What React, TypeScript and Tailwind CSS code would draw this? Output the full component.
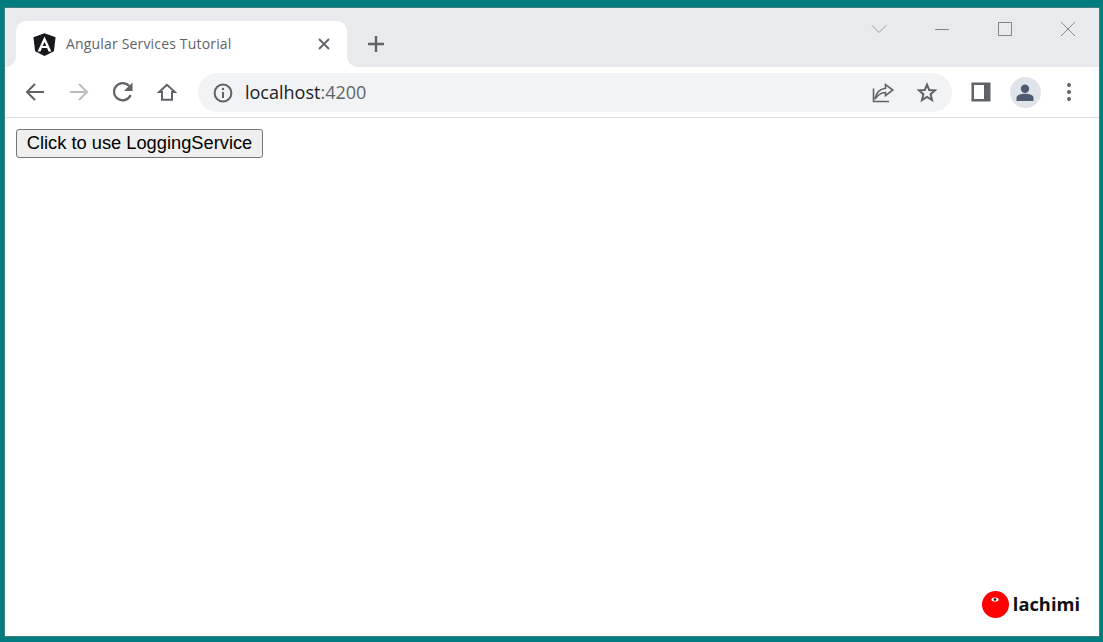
import React from "react";

const Ico = ({ children, size = 24, className = "" }: { children: React.ReactNode; size?: number; className?: string }) => (
  <svg width={size} height={size} viewBox={`0 0 ${size} ${size}`} fill="none" className={className}>
    {children}
  </svg>
);

function WindowControls() {
  return (
    <div className="ml-auto self-start flex">
      <div className="w-[63px] h-[42px] flex items-center justify-center">
        <Ico size={16}><path d="M1 4.5 L8 11.5 L15 4.5" stroke="#9a9ca0" strokeWidth="1" /></Ico>
      </div>
      <div className="w-[63px] h-[42px] flex items-center justify-center">
        <Ico size={16}><path d="M1 8.5 H15" stroke="#85878b" strokeWidth="1" /></Ico>
      </div>
      <div className="w-[63px] h-[42px] flex items-center justify-center">
        <Ico size={16}><rect x="1.5" y="1.5" width="13" height="13" stroke="#85878b" strokeWidth="1" /></Ico>
      </div>
      <div className="w-[63px] h-[42px] flex items-center justify-center">
        <Ico size={16}><path d="M1 1 L15 15 M15 1 L1 15" stroke="#85878b" strokeWidth="1" /></Ico>
      </div>
    </div>
  );
}

function Tab() {
  return (
    <div className="relative w-[331px] h-[46px] bg-white rounded-t-[10px] flex items-center pl-[17px] pr-[17px]">
      <div className="absolute left-[-11px] bottom-0 w-[11px] h-[11px] bg-white">
        <div className="w-full h-full bg-[#e8eaed] rounded-br-[11px]" />
      </div>
      <div className="absolute right-[-11px] bottom-0 w-[11px] h-[11px] bg-white">
        <div className="w-full h-full bg-[#e8eaed] rounded-bl-[11px]" />
      </div>
      <svg width="23" height="23" viewBox="0 0 23 23" className="shrink-0">
        <path d="M11.5 0.3 L22.6 4.2 L20.9 18.3 L11.5 23 L2.1 18.3 L0.4 4.2 Z" fill="#16181b" />
        <path d="M11.5 3.6 L4.6 18.6 H7.5 L8.9 15.1 H14.1 L15.5 18.6 H18.4 Z M11.5 8.9 L13.3 13 H9.7 Z" fill="#ffffff" fillRule="evenodd" />
      </svg>
      <span className="ml-[10px] text-[14px] tracking-[0.17px] leading-none text-[#5f6368] font-['Open_Sans',sans-serif]">Angular Services Tutorial</span>
      <svg width="12" height="12" viewBox="0 0 12 12" className="ml-auto">
        <path d="M1 1 L11 11 M11 1 L1 11" stroke="#5f6368" strokeWidth="1.8" />
      </svg>
    </div>
  );
}

function ToolbarButton({ children }: { children: React.ReactNode }) {
  return <div className="w-[44px] h-[39px] pb-[1px] flex items-center justify-center shrink-0">{children}</div>;
}

function Toolbar() {
  return (
    <div className="h-[51px] bg-white border-b border-[#dadce0] flex items-center pt-[1px] pl-[8px] shrink-0">
      <ToolbarButton>
        <Ico><path d="M21 12 H4.5 M12 4 L4 12 L12 20" stroke="#5f6368" strokeWidth="2" /></Ico>
      </ToolbarButton>
      <ToolbarButton>
        <Ico><path d="M3 12 H19.5 M12 4 L20 12 L12 20" stroke="#babcbe" strokeWidth="2" /></Ico>
      </ToolbarButton>
      <ToolbarButton>
        <Ico>
          <path d="M19.6 15 A8.6 8.6 0 1 1 18.1 6" stroke="#5f6368" strokeWidth="2.2" />
          <path d="M21.5 2.5 V11 H13 Z" fill="#5f6368" />
        </Ico>
      </ToolbarButton>
      <ToolbarButton>
        <Ico><path d="M12 4.8 L4.2 12 H7 V19.8 H17 V12 H19.8 Z" stroke="#5f6368" strokeWidth="2" strokeLinejoin="miter" /></Ico>
      </ToolbarButton>
      <div className="ml-[9px] w-[754px] h-[39px] rounded-full bg-[#f1f3f4] flex items-center pl-[14px] pr-[3px]">
        <Ico size={22}>
          <circle cx="11" cy="11" r="8.4" stroke="#5f6368" strokeWidth="2" />
          <path d="M11 10 V16" stroke="#5f6368" strokeWidth="2" />
          <circle cx="11" cy="7" r="1.2" fill="#5f6368" />
        </Ico>
        <span className="ml-[11px] pb-[2px] text-[18px] leading-none font-['Open_Sans',sans-serif] text-[#202124]">
          localhost<span className="text-[#5f6368]">:4200</span>
        </span>
        <div className="ml-auto flex items-center">
          <ToolbarButton>
            <Ico>
              <path d="M2.5 8.5 V21.5 H18 M4 19 C5 13 9 9 14.5 8.3 V4.5 L21.8 10 L14.5 15.7 V12.5 C10 12.5 7 14.5 4 19 Z" stroke="#5f6368" strokeWidth="1.6" />
            </Ico>
          </ToolbarButton>
          <ToolbarButton>
            <Ico>
              <path d="M12 4.6 L14.2 10 L20 10.4 L15.6 14.2 L17 20 L12 16.9 L7 20 L8.4 14.2 L4 10.4 L9.8 10 Z" stroke="#5f6368" strokeWidth="2" strokeLinejoin="miter" />
            </Ico>
          </ToolbarButton>
        </div>
      </div>
      <div className="ml-[7px] flex items-center">
        <ToolbarButton>
          <Ico size={20}>
            <rect x="0.5" y="0.5" width="19" height="19" fill="#5f6368" />
            <rect x="3" y="3" width="10" height="14" fill="#ffffff" />
          </Ico>
        </ToolbarButton>
        <ToolbarButton>
          <div className="w-[31px] h-[31px] rounded-full bg-[#e0e3e9] flex items-center justify-center">
            <Ico size={20}>
              <circle cx="10" cy="6.8" r="4.2" fill="#4d5a70" />
              <path d="M1.5 19 V15.8 C1.5 13 6 11.8 10 11.8 C14 11.8 18.5 13 18.5 15.8 V19 Z" fill="#4d5a70" />
            </Ico>
          </div>
        </ToolbarButton>
        <ToolbarButton>
          <div className="flex flex-col gap-[3px]">
            <div className="w-[4px] h-[4px] rounded-full bg-[#5f6368]" />
            <div className="w-[4px] h-[4px] rounded-full bg-[#5f6368]" />
            <div className="w-[4px] h-[4px] rounded-full bg-[#5f6368]" />
          </div>
        </ToolbarButton>
      </div>
    </div>
  );
}

function Watermark() {
  return (
    <div className="absolute right-[19px] bottom-[18px] flex items-center">
      <svg width="27" height="27" viewBox="0 0 27 27">
        <circle cx="13.5" cy="13.5" r="13.5" fill="#ff0000" />
        <ellipse cx="13" cy="8.5" rx="3.6" ry="2.1" fill="#ffffff" />
        <circle cx="13" cy="8.5" r="1.3" fill="#111111" />
      </svg>
      <span className="ml-[4px] text-[18.3px] leading-none font-bold text-[#111111] font-['Open_Sans',sans-serif]">lachimi</span>
    </div>
  );
}

export default function App() {
  return (
    <div className="w-[1103px] h-[642px] overflow-hidden bg-[#017d7f] pt-[8px] pl-[5px] pr-[4px] pb-[6px]">
      <div className="h-full flex flex-col bg-white shadow-[0_0_0_1px_#3f8082]">
        <div className="h-[59px] bg-[#e8eaed] flex items-end pl-[11px] shrink-0">
          <Tab />
          <div className="ml-[11px] w-[36px] h-[46px] flex items-center justify-center">
            <Ico size={20}><path d="M10 2 V18 M2 10 H18" stroke="#5f6368" strokeWidth="2.4" /></Ico>
          </div>
          <WindowControls />
        </div>
        <Toolbar />
        <div className="relative flex-1 pl-[11px] pt-[11px]">
          <button className="h-[29px] w-[247px] pb-[1px] bg-[#efefef] border border-[#767676] rounded-[3px] text-[18.3px] leading-none text-black font-['Liberation_Sans',Arial,sans-serif]">
            Click to use LoggingService
          </button>
          <Watermark />
        </div>
      </div>
    </div>
  );
}
